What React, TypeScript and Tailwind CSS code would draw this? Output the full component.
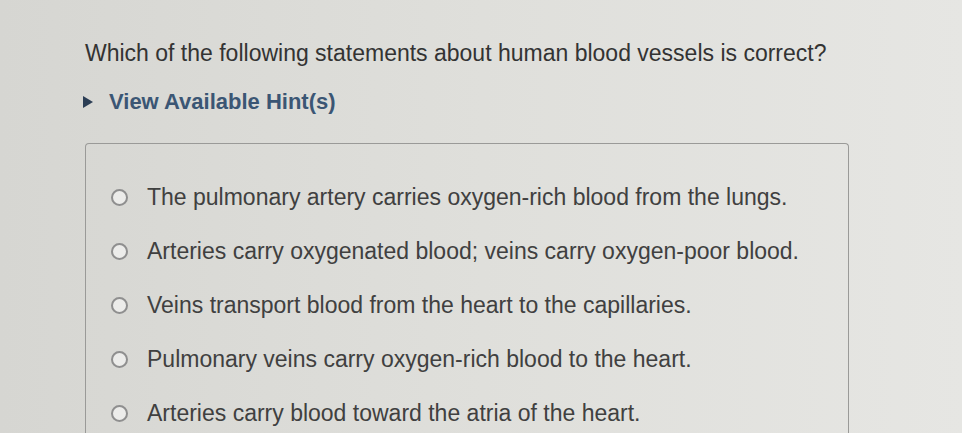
import React from "react";

const options = [
  "The pulmonary artery carries oxygen-rich blood from the lungs.",
  "Arteries carry oxygenated blood; veins carry oxygen-poor blood.",
  "Veins transport blood from the heart to the capillaries.",
  "Pulmonary veins carry oxygen-rich blood to the heart.",
  "Arteries carry blood toward the atria of the heart.",
];

export default function App() {
  return (
    <div
      className="w-[962px] h-[433px] overflow-hidden bg-gradient-to-r from-[#d6d6d2] via-[#dfdfdb] to-[#e6e6e3] text-[#3a3a3a]"
      style={{ fontFamily: '"Liberation Sans", Arial, sans-serif' }}
    >
      <div className="pl-[85px] pt-[39px]">
        <p className="text-[23px] leading-[28px] text-[#333]">
          Which of the following statements about human blood vessels is correct?
        </p>
        <div className="mt-[22px] flex items-center gap-[16px]">
          <svg width="10" height="12" viewBox="0 0 10 12" className="ml-[-2px]">
            <polygon points="0,0 10,6 0,12" fill="#2c3e55" />
          </svg>
          <span className="text-[22px] leading-[26px] font-bold text-[#3b5674]">View Available Hint(s)</span>
        </div>
        <div className="mt-[28px] w-[764px] rounded-[4px] border border-[#9a9a98] border-b-0 pl-[25px] pt-[26px]">
          {options.map((o) => (
            <div key={o} className="flex items-center gap-[19px] h-[54px]">
              <span className="w-[17px] h-[17px] rounded-full border-2 border-[#8f8f8f] bg-[#ececea]" />
              <span className="text-[23px] text-[#404040]">{o}</span>
            </div>
          ))}
        </div>
      </div>
    </div>
  );
}
